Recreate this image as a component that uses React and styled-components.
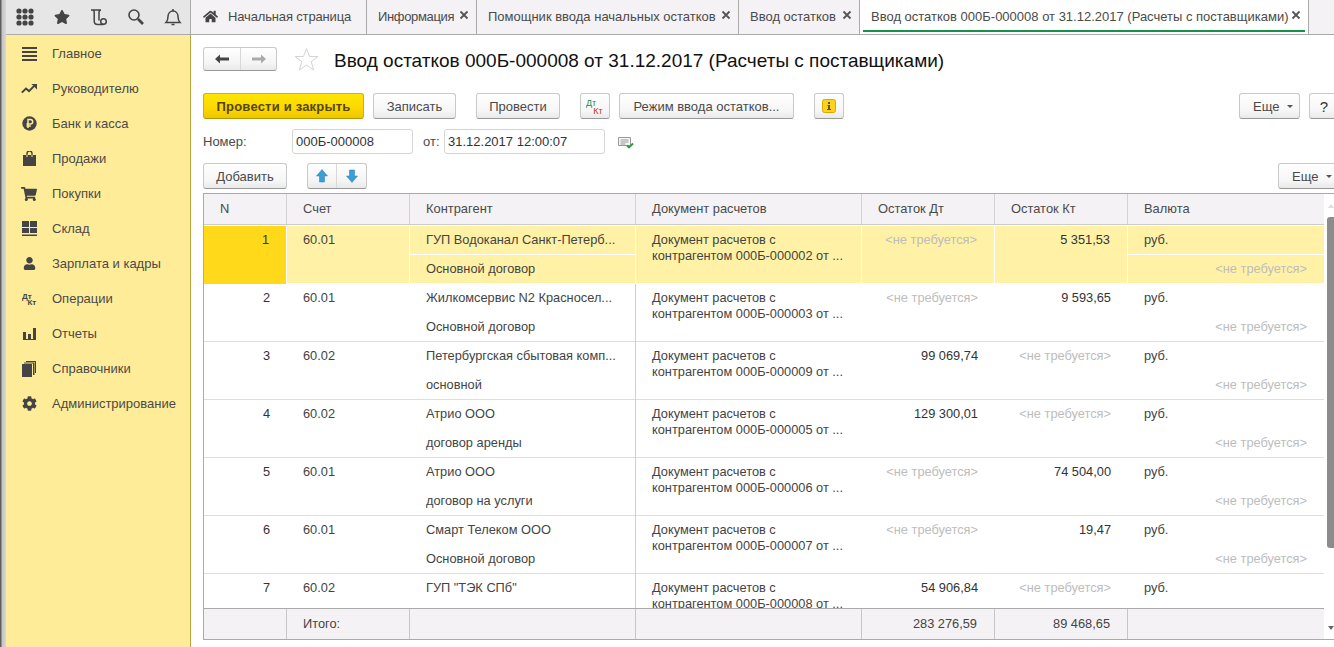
import React from "react";
import styled, { createGlobalStyle } from "styled-components";
import { FaCog, FaShoppingCart, FaUser, FaStar, FaHome } from "react-icons/fa";

const Global = createGlobalStyle`
  html, body { margin: 0; padding: 0; height: 100%; overflow: hidden; background: #fff; }
  body { font-family: "Liberation Sans", Arial, sans-serif; font-size: 13px; color: #444; }
  #root { height: 100%; }
`;

const Page = styled.div`
  width: 1334px; height: 647px; display: flex; overflow: hidden;
  background: #fff;
`;
const Edge = styled.div`
  width: 6px; flex: none;
  background: linear-gradient(90deg, #555 0, #666 1px, #c4c4c4 2px, #d8d8d8 6px);
`;
const Frame = styled.div`flex: 1; min-width: 0; display: flex; flex-direction: column;`;
const TopBar = styled.header`
  height: 35px; flex: none; display: flex; background: #f5f2f5; border-bottom: 1px solid #aaa; box-sizing: border-box;
`;
const Tools = styled.div`
  width: 185px; flex: none; display: flex; align-items: center; background: #e6e6e6;
  border-right: 1px solid #aaa; box-sizing: border-box; color: #444;
`;
const ToolSlot = styled.span`
  width: 37px; flex: none; display: flex; justify-content: center; align-items: center;
`;
const Tab = styled.div`
  width: ${p => p.$w}px; flex: none; box-sizing: border-box; display: flex; align-items: center;
  padding: 0 0 2px 11px; border-right: 1px solid #aaa; white-space: nowrap;
  font-size: 13px; color: #4a4a4a; position: relative; letter-spacing: ${p => p.$track || 0}px;
  background: ${p => (p.$active ? "#fff" : "transparent")};
`;
const TabMark = styled.span`
  position: absolute; left: 3px; right: 3px; bottom: 2px; height: 2px; background: #16924c;
`;
const Close = styled.span`
  position: absolute; right: 7px; top: 10px; width: 10px; height: 10px; display: flex;
`;
const HomeGlyph = styled.span`display: flex; margin: 0 10px 0 1px; color: #444;`;

const Body = styled.div`flex: 1; display: flex; min-height: 0;`;
const Side = styled.nav`
  width: 185px; flex: none; box-sizing: border-box; background: #ffec99; border-right: 1px solid #b5a640;
  display: flex; flex-direction: column; padding-top: 1px;
`;
const SideItem = styled.div`
  height: 35px; flex: none; display: flex; align-items: center; color: #4a4a4a; font-size: 13px;
`;
const SideIcon = styled.span`
  width: 46px; flex: none; display: flex; justify-content: center; align-items: center; color: #444;
`;

const Main = styled.main`
  flex: 1; min-width: 0; display: flex; flex-direction: column; padding: 12px 0 0 12px; box-sizing: border-box;
`;
const TitleRow = styled.div`display: flex; align-items: flex-start; height: 46px; flex: none;`;
const Title = styled.h1`
  margin: 0 0 0 15px; font-weight: 400; font-size: 19px; line-height: 28px; color: #111; white-space: nowrap;
`;
const StarSlot = styled.span`margin-left: 17px; display: flex;`;

const Group = styled.div`
  display: flex; height: ${p => p.$h || 24}px; box-sizing: border-box; border: 1px solid #c9c9c9; border-bottom-color: #999;
  border-radius: 3px; background: linear-gradient(#fff, #f4f4f4 70%, #e9e9e9); overflow: hidden; flex: none;
  margin-left: ${p => p.$ml || 0}px;
`;
const GroupCell = styled.span`
  width: ${p => p.$w}px; display: flex; align-items: center; justify-content: center;
  & + & { border-left: 1px solid #d8d8d8; }
`;
const CommandRow = styled.div`
  height: 26px; flex: none; display: flex; margin-right: -5px;
`;
const Btn = styled.button`
  width: ${p => p.$w}px; height: 26px; margin: 0 0 0 ${p => p.$ml || 0}px; padding: 0; flex: none; box-sizing: border-box;
  display: flex; align-items: center; justify-content: center;
  font: 13px "Liberation Sans", Arial, sans-serif; color: #4a4a4a;
  border: 1px solid #c9c9c9; border-bottom-color: #999; border-radius: 3px;
  background: linear-gradient(#fff, #f6f6f6 70%, #e9e9e9);
`;
const Primary = styled(Btn)`
  font-weight: 700; color: #544500; letter-spacing: .2px; border-color: #d4b100; border-bottom-color: #b39600;
  background: linear-gradient(#ffe500, #fbd800 60%, #f0c400);
`;
const MoreBtn = styled(Btn)`justify-content: flex-start; padding-left: 13px; gap: 8px;`;
const HelpBtn = styled(Btn)`font-size: 15px; color: #333;`;
const Spacer = styled.span`flex: 1;`;
const FormRow = styled.div`
  height: 25px; flex: none; margin-top: 10px; display: flex; align-items: center;
`;
const Label = styled.span`
  width: ${p => p.$w}px; flex: none; margin-left: ${p => p.$ml || 0}px; color: #4a4a4a;
`;
const Field = styled.div`
  width: ${p => p.$w}px; height: 25px; box-sizing: border-box; flex: none; border: 1px solid #d5d5d5; border-radius: 3px;
  display: flex; align-items: center; padding-left: 3px; color: #333; white-space: nowrap;
`;
const TableBar = styled(CommandRow)`margin-top: 9px;`;
const Table = styled.section`
  margin-top: 4px; flex: none; height: 447px; display: flex; box-sizing: border-box;
  border-top: 1px solid #aaa; border-bottom: 1px solid #aaa; border-left: 1px solid #aaa; overflow: hidden;
`;
const Columns = styled.div`width: 1120px; flex: none; display: flex; flex-direction: column;`;
const cols = "83px 123px 226px 226px 133px 133px 196px";
const Head = styled.div`
  display: grid; grid-template-columns: ${cols}; height: 31px; flex: none; box-sizing: border-box;
  background: #f5f2f5; border-bottom: 1px solid #ccc;
`;
const HeadCell = styled.div`
  padding: 0 0 1px 16px; display: flex; align-items: center; color: #4a4a4a; font-size: 12.9px;
  border-right: 1px solid #d5d2d5; box-sizing: border-box;
  &:last-child { border-right: 0; }
`;
const Rows = styled.div`flex: 1; min-height: 0; overflow: hidden; border-top: 1px solid #fff;`;
const Row = styled.div`
  display: grid; grid-template-columns: ${cols}; height: 58px; box-sizing: border-box;
  border-bottom: 1px solid ${p => (p.$sel ? "#fff" : "#dedede")};
  background: ${p => (p.$sel ? "#fff2a6" : "#fff")};
`;
const Cell = styled.div`
  min-width: 0; box-sizing: border-box; padding: ${p => (p.$doc ? "6px 0 0 16px" : "0")};
  ${p => (p.$doc ? "line-height: 16px;" : "")}
  ${p => (p.$sel ? "border-right: 1px solid #fff;" : "")}
  ${p => (p.$divide ? "border-right: 1px solid #cfcfcf;" : "")}
  ${p => (p.$num ? "background: #ffd91a;" : "")}
  white-space: nowrap; color: #444; font-size: 12.8px;
`;
const Line = styled.div`
  height: 29px; box-sizing: border-box; line-height: 28px; padding: ${p => (p.$right ? "0 17px 0 0" : "0 0 0 16px")};
  text-align: ${p => (p.$right ? "right" : "left")};
  color: ${p => (p.$muted ? "#bdbdbd" : p.$strong ? "#333" : "#444")};
  ${p => (p.$sep ? "border-bottom: 1px solid #fff;" : "")}
`;
const Foot = styled.div`
  display: grid; grid-template-columns: ${cols}; height: 31px; flex: none; box-sizing: border-box;
  background: #f5f2f5; border-top: 1px solid #aaa;
`;
const FootCell = styled.div`
  display: flex; align-items: center; box-sizing: border-box; border-right: 1px solid #c8c5c8; padding: 0 17px 1px 16px;
  justify-content: ${p => (p.$right ? "flex-end" : "flex-start")}; color: #444; font-size: 12.8px;
  &:last-child { border-right: 0; }
`;
const Scroll = styled.div`
  width: 10px; flex: none; display: flex; flex-direction: column; align-items: flex-end; background: #fff;
`;
const ArrowUp = styled.span`
  margin-top: 10px; width: 0; height: 0; align-self: center; margin-left: 4px;
  border-left: 3px solid transparent; border-right: 3px solid transparent; border-bottom: 4px solid #ddd;
`;
const Thumb = styled.span`
  margin-top: 9px; width: 7px; height: 331px; background: #8c8c8c; border-radius: 3px 0 0 3px;
`;
const ArrowDown = styled.span`
  margin-top: 78px; width: 0; height: 0; align-self: center; margin-left: 4px;
  border-left: 3px solid transparent; border-right: 3px solid transparent; border-top: 4px solid #666;
`;
const Caret = styled.span`
  width: 0; height: 0; border-left: 3px solid transparent; border-right: 3px solid transparent; border-top: 3px solid #555;
`;
const DtKt = styled.svg`display: block;`;

const X = () => (
  <svg width="10" height="10" viewBox="0 0 10 10"><path d="M1.5 1.5l7 7M8.5 1.5l-7 7" stroke="#555" strokeWidth="1.8" /></svg>
);
const Dots = () => (
  <svg width="18" height="18" viewBox="0 0 18 18" fill="#444">
    {[3, 9, 15].flatMap(y => [3, 9, 15].map(x => <circle key={x + "-" + y} cx={x} cy={y} r="2.6" />))}
  </svg>
);
const History = () => (
  <svg width="18" height="18" viewBox="0 0 18 18" fill="none" stroke="#444" strokeWidth="1.5">
    <path d="M1 2h10M1 2c2.500-.5 3.200 1 3.200 2.500v8.500c0 2 1.500 3.500 3.500 3.500h5.800M11 2c-1.500 0-2 1-2 2.500v8" />
    <circle cx="13.500" cy="13.500" r="2.800" />
  </svg>
);
const Search = () => (
  <svg width="18" height="18" viewBox="0 0 18 18" fill="none" stroke="#444">
    <circle cx="7" cy="7" r="5" strokeWidth="1.6" /><path d="M11 11l5 5" strokeWidth="2.6" />
  </svg>
);
const Bell = () => (
  <svg width="18" height="18" viewBox="0 0 18 18" fill="none" stroke="#444" strokeWidth="1.5">
    <path d="M2 14.500h14c-1.600-1.600-2-3-2-6 0-3-2-5.500-5-5.500S4 5.500 4 8.500c0 3-.4 4.400-2 6z" />
    <path d="M9 3V1M7.500 16.500h3" />
  </svg>
);
const Lines = () => (
  <svg width="15" height="14" viewBox="0 0 15 14" fill="#444"><path d="M0 0h15v2H0zM0 4h15v2H0zM0 8h15v2H0zM0 12h15v2H0z" /></svg>
);
const Trend = () => (
  <svg width="16" height="10" viewBox="0 0 16 10" fill="none"><path d="M.8 8.600 5 4.600l3 2.500 5-5" stroke="#444" strokeWidth="2" /><path d="M10.500 0H16v5.500z" fill="#444" /></svg>
);
const Ruble = () => (
  <svg width="15" height="15" viewBox="0 0 15 15">
    <circle cx="7.500" cy="7.500" r="7.200" fill="#444" />
    <path d="M6 12V3.500h2.400a2.300 2.300 0 0 1 0 4.600H4.500M4.500 10h4.300" fill="none" stroke="#ffec99" strokeWidth="1.500" />
  </svg>
);
const Bag = () => (
  <svg width="13" height="15" viewBox="0 0 13 15" fill="none">
    <path d="M0 4h13v11H0z" fill="#444" /><path d="M4 6V2.500a2.500 2.500 0 0 1 5 0V6" stroke="#444" strokeWidth="1.400" />
    <path d="M4 4v2M9 4v2" stroke="#ffec99" strokeWidth="1" />
  </svg>
);
const Store = () => (
  <svg width="15" height="15" viewBox="0 0 15 15" fill="#444"><path d="M0 0h7v6H0zM8 0h7v6H8zM0 7h7v5H0zM8 7h7v5H8zM0 13.500h15V15H0z" /></svg>
);
const Bars = () => (
  <svg width="13" height="12" viewBox="0 0 13 12" fill="#444"><path d="M0 4h3v7H0zM5 6h3v5H5zM10 0h3v11h-3zM0 11h13v1H0z" /></svg>
);
const Stack = () => (
  <svg width="14" height="16" viewBox="0 0 14 16" fill="#444"><path d="M0 3h10v13H0z" /><path d="M11 2h1.500v12H11zM2 1.500h10.500V2.500H2zM13 0h1v12h-1zM4 0h10v1H4z" /></svg>
);
const DtKtIcon = ({ a = "#444", b = "#444", w = 15, size = 8, weight = 700 }) => (
  <DtKt width={w} height={w - 1} viewBox={`0 0 ${w} ${w - 1}`} fontFamily="Liberation Sans, sans-serif" fontSize={size} fontWeight={weight}>
    <text x="0" y={size - 1} fill={a}>Дт</text><text x={w - size * 1.2} y={w - 2} fill={b}>Кт</text>
  </DtKt>
);
const Check = () => (
  <svg width="16" height="12" viewBox="0 0 16 12" fill="none" style={{ display: "block", marginTop: 3 }}>
    <path d="M.5.500h12v8H.5z" fill="#f5f5f5" stroke="#999" />
    <path d="M2.500 3h8M2.500 5h8M2.500 7h5" stroke="#999" />
    <path d="M9 8.500l2 2 4-4" stroke="#2a9d3c" strokeWidth="1.800" />
  </svg>
);
const ArrowL = ({ c }) => (
  <svg width="14" height="10" viewBox="0 0 14 10" fill={c}><path d="M0 5l5-4.500V3.500h9v3H5v3z" /></svg>
);
const ArrowR = ({ c }) => (
  <svg width="14" height="10" viewBox="0 0 14 10" fill={c}><path d="M14 5L9 .500V3.500H0v3h9v3z" /></svg>
);
const Blue = ({ down }) => (
  <svg width="12" height="14" viewBox="0 0 12 14">
    <g transform={down ? "rotate(180 6 7)" : undefined}>
      <path d="M6 .500l5.500 6.500H8.500v6h-5V7H.500z" fill="#3b9ed8" stroke="#2c7fb3" strokeWidth=".5" />
    </g>
  </svg>
);
const Info = () => (
  <svg width="14" height="14" viewBox="0 0 14 14">
    <rect x=".5" y=".5" width="13" height="13" rx="2" fill="#fbd21c" stroke="#d8a900" />
    <path d="M6 3h2v2H6zM5.500 6H8v4h1v1H5v-1h1V7h-.500z" fill="#6b5000" />
  </svg>
);
const OutlineStar = () => (
  <svg width="25" height="24" viewBox="0 0 25 24" fill="#fff" stroke="#d4d4d4"><path d="M12.500 1.500l3 8h8.500l-6.800 5.200 2.500 8.300-7.200-5-7.200 5 2.500-8.300L1 9.500h8.500z" /></svg>
);

const menu = [
  ["Главное", <Lines />], ["Руководителю", <Trend />], ["Банк и касса", <Ruble />], ["Продажи", <Bag />],
  ["Покупки", <FaShoppingCart size={16} />], ["Склад", <Store />], ["Зарплата и кадры", <FaUser size={13} />],
  ["Операции", <DtKtIcon />], ["Отчеты", <Bars />], ["Справочники", <Stack />], ["Администрирование", <FaCog size={15} />],
];
const tabs = [
  { t: "Информация", w: 110, track: -0.35 }, { t: "Помощник ввода начальных остатков", w: 262 }, { t: "Ввод остатков", w: 121 },
  { t: "Ввод остатков 000Б-000008 от 31.12.2017 (Расчеты с поставщиками)", w: 449, active: true },
];
const NO = "<не требуется>";
const rows = [
  ["60.01", "ГУП Водоканал Санкт-Петерб...", "Основной договор", "000Б-000002", NO, "5 351,53"],
  ["60.01", "Жилкомсервис N2 Красносел...", "Основной договор", "000Б-000003", NO, "9 593,65"],
  ["60.02", "Петербургская сбытовая комп...", "основной", "000Б-000009", "99 069,74", NO],
  ["60.02", "Атрио ООО", "договор аренды", "000Б-000005", "129 300,01", NO],
  ["60.01", "Атрио ООО", "договор на услуги", "000Б-000006", NO, "74 504,00"],
  ["60.01", "Смарт Телеком ООО", "Основной договор", "000Б-000007", NO, "19,47"],
  ["60.02", 'ГУП "ТЭК СПб"', "", "000Б-000008", "54 906,84", NO],
];
const heads = ["N", "Счет", "Контрагент", "Документ расчетов", "Остаток Дт", "Остаток Кт", "Валюта"];

export default function App() {
  return (
    <Page>
      <Global />
      <Edge />
      <Frame>
        <TopBar>
          <Tools>
            <ToolSlot><Dots /></ToolSlot>
            <ToolSlot><FaStar size={16} /></ToolSlot>
            <ToolSlot><History /></ToolSlot>
            <ToolSlot><Search /></ToolSlot>
            <ToolSlot><Bell /></ToolSlot>
          </Tools>
          <Tab $w={176} $track={-0.15}><HomeGlyph><FaHome size={15} /></HomeGlyph>Начальная страница</Tab>
          {tabs.map(t => (
            <Tab key={t.t} $w={t.w} $active={t.active} $track={t.track}>
              {t.t}
              <Close><X /></Close>
              {t.active && <TabMark />}
            </Tab>
          ))}
        </TopBar>
        <Body>
          <Side>
            {menu.map(([t, icon]) => (
              <SideItem key={t}><SideIcon>{icon}</SideIcon>{t}</SideItem>
            ))}
          </Side>
          <Main>
            <TitleRow>
              <Group $h={24}>
                <GroupCell $w={36}><ArrowL c="#444" /></GroupCell>
                <GroupCell $w={35}><ArrowR c="#aaa" /></GroupCell>
              </Group>
              <StarSlot><OutlineStar /></StarSlot>
              <Title>Ввод остатков 000Б-000008 от 31.12.2017 (Расчеты с поставщиками)</Title>
            </TitleRow>
            <CommandRow>
              <Primary $w={161}>Провести и закрыть</Primary>
              <Btn $w={83} $ml={9}>Записать</Btn>
              <Btn $w={84} $ml={20}>Провести</Btn>
              <Btn $w={30} $ml={20}><DtKtIcon a="#16924c" b="#c0392b" w={18} size={9} weight={400} /></Btn>
              <Btn $w={175} $ml={9}>Режим ввода остатков...</Btn>
              <Btn $w={30} $ml={20}><Info /></Btn>
              <Spacer />
              <MoreBtn $w={61}>Еще <Caret /></MoreBtn>
              <HelpBtn $w={30} $ml={9}>?</HelpBtn>
            </CommandRow>
            <FormRow>
              <Label $w={89}>Номер:</Label>
              <Field $w={121}>000Б-000008</Field>
              <Label $w={21} $ml={10}>от:</Label>
              <Field $w={161}>31.12.2017 12:00:07</Field>
              <Label $w={16} $ml={13}><Check /></Label>
            </FormRow>
            <TableBar>
              <Btn $w={84}>Добавить</Btn>
              <Group $h={26} $ml={20}>
                <GroupCell $w={28}><Blue /></GroupCell>
                <GroupCell $w={29}><Blue down /></GroupCell>
              </Group>
              <Spacer />
              <MoreBtn $w={61}>Еще <Caret /></MoreBtn>
            </TableBar>
            <Table>
              <Columns>
                <Head>{heads.map(h => <HeadCell key={h}>{h}</HeadCell>)}</Head>
                <Rows>
                  {rows.map((r, i) => {
                    const sel = i === 0;
                    const debit = r[4] === NO;
                    const credit = r[5] === NO;
                    return (
                      <Row key={i} $sel={sel}>
                        <Cell $sel={sel} $num={sel}><Line $right $strong>{i + 1}</Line></Cell>
                        <Cell $sel={sel}><Line>{r[0]}</Line></Cell>
                        <Cell $sel={sel} $divide={!sel}>
                          <Line $sep={sel}>{r[1]}</Line>
                          <Line>{r[2]}</Line>
                        </Cell>
                        <Cell $sel={sel} $doc>
                          Документ расчетов с<br />контрагентом {r[3]} от ...
                        </Cell>
                        <Cell $sel={sel}><Line $right $muted={debit} $strong={!debit}>{r[4]}</Line></Cell>
                        <Cell $sel={sel}><Line $right $muted={credit} $strong={!credit}>{r[5]}</Line></Cell>
                        <Cell>
                          <Line $sep={sel}>руб.</Line>
                          <Line $right $muted>{NO}</Line>
                        </Cell>
                      </Row>
                    );
                  })}
                </Rows>
                <Foot>
                  <FootCell />
                  <FootCell>Итого:</FootCell>
                  <FootCell />
                  <FootCell />
                  <FootCell $right>283 276,59</FootCell>
                  <FootCell $right>89 468,65</FootCell>
                  <FootCell />
                </Foot>
              </Columns>
              <Scroll>
                <ArrowUp />
                <Thumb />
                <ArrowDown />
              </Scroll>
            </Table>
          </Main>
        </Body>
      </Frame>
    </Page>
  );
}
